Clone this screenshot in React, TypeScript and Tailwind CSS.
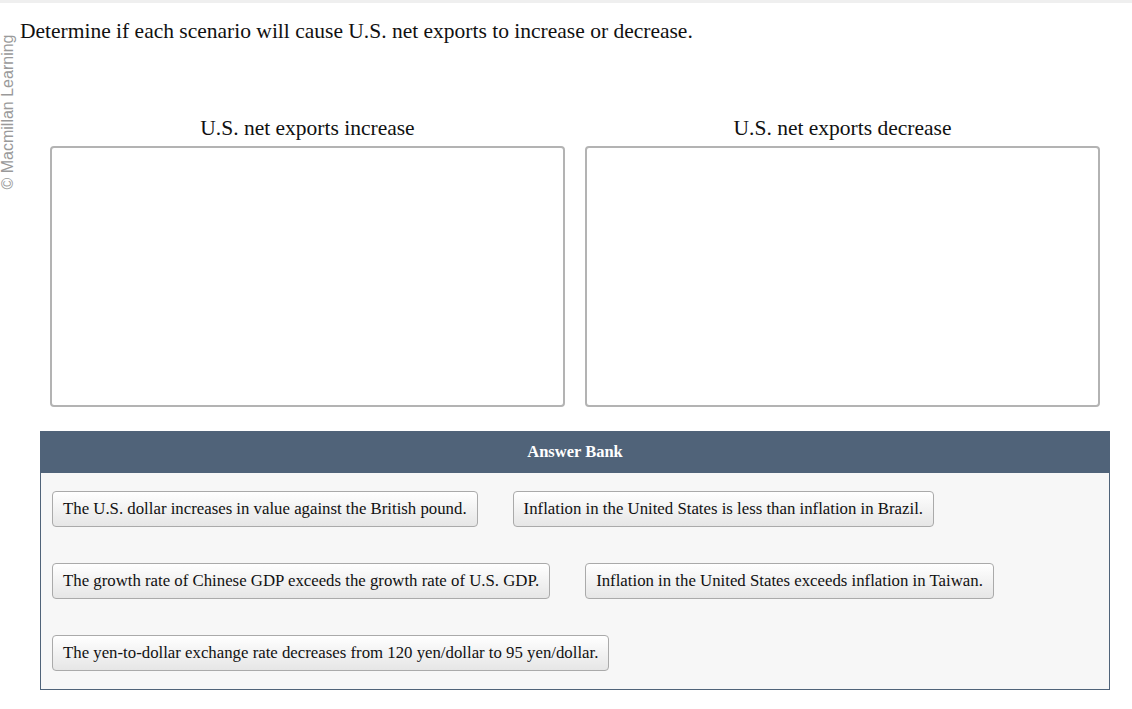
import React from "react";

const serif = { fontFamily: '"Liberation Serif", "Times New Roman", serif' };

const rows: string[][] = [
  [
    "The U.S. dollar increases in value against the British pound.",
    "Inflation in the United States is less than inflation in Brazil.",
  ],
  [
    "The growth rate of Chinese GDP exceeds the growth rate of U.S. GDP.",
    "Inflation in the United States exceeds inflation in Taiwan.",
  ],
  [
    "The yen-to-dollar exchange rate decreases from 120 yen/dollar to 95 yen/dollar.",
  ],
];

const DropZone: React.FC<{ title: string }> = ({ title }) => (
  <div className="flex flex-col">
    <div className="text-center text-[21.5px] leading-[22px] text-[#111] pb-[7px]">{title}</div>
    <div className="h-[261px] rounded-[4px] border-2 border-[#b3b3b3] bg-white" />
  </div>
);

const Chip: React.FC<{ text: string }> = ({ text }) => (
  <div className="h-[36px] flex items-center px-[10px] rounded-[4px] border border-[#aaaaaa] bg-gradient-to-b from-white to-[#e6e6e6] text-[16.8px] text-[#111] whitespace-nowrap">
    {text}
  </div>
);

export default function App() {
  return (
    <div className="relative w-[1132px] h-[709px] bg-white overflow-hidden" style={serif}>
      <div className="h-[3px] bg-[#efefef]" />

      {/* vertical watermark */}
      <div className="absolute left-[-77px] top-[104px] w-[170px] h-[16px] -rotate-90 text-center text-[16px] leading-[16px] text-[#9a9a9a] whitespace-nowrap font-['Liberation_Sans',Arial,sans-serif]">
        © Macmillan Learning
      </div>

      <div className="pl-[20px] pt-[16px] text-[21.5px] leading-[24px] text-[#111]">
        Determine if each scenario will cause U.S. net exports to increase or decrease.
      </div>

      <div className="grid grid-cols-2 gap-[20px] pl-[50px] pr-[32px] pt-[74px]">
        <DropZone title="U.S. net exports increase" />
        <DropZone title="U.S. net exports decrease" />
      </div>

      <div className="mx-[40px] mt-[24px] w-[1070px] border border-[#506379]">
        <div className="h-[41px] bg-[#506379] flex items-center justify-center text-white font-bold text-[16.5px]">
          Answer Bank
        </div>
        <div className="bg-[#f7f7f7] pl-[11px] pt-[18px] pb-[18px] flex flex-col gap-[36px]">
          {rows.map((row, i) => (
            <div key={i} className="flex gap-[35px]">
              {row.map((t) => (
                <Chip key={t} text={t} />
              ))}
            </div>
          ))}
        </div>
      </div>
    </div>
  );
}
